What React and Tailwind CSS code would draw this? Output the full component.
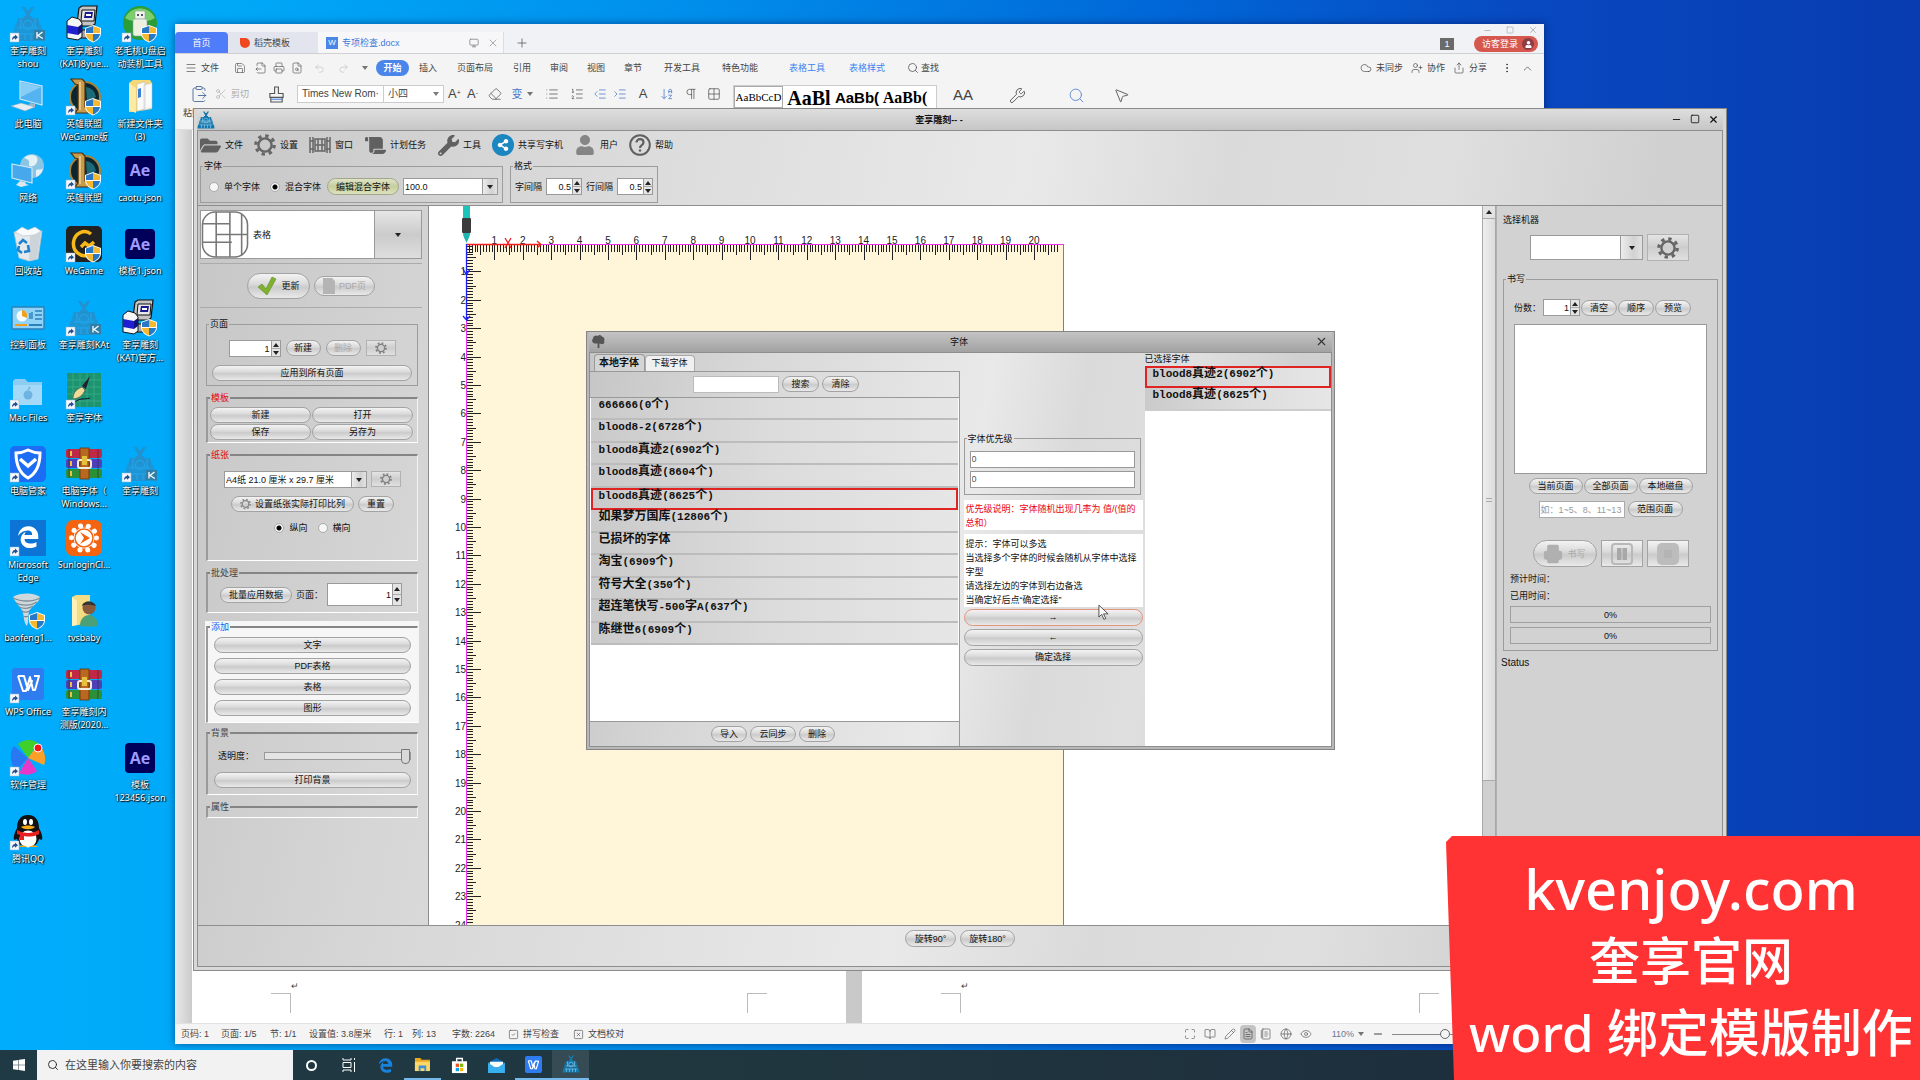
import React from "react";
import {
  Menu, Save, Printer, Search, Undo2, Redo2, Scissors, ClipboardPaste, Eraser, List, ListOrdered,
  IndentDecrease, IndentIncrease, ArrowDownAZ, Pilcrow, Grid2x2, Wrench, MousePointer2, Cloud, UserPlus, Share,
  EllipsisVertical, ChevronUp, Plus, X, Minus, Square, Monitor, FileSearch, FileOutput, Maximize, BookOpen, Pencil,
  FileText, NotebookText, Globe, Eye, SquareCheck, SquareX,
} from "lucide-react";
import { FaFolderOpen, FaWrench, FaUser, FaShareAlt, FaScroll, FaEdgeLegacy } from "react-icons/fa";

const METAL = "bg-[linear-gradient(100deg,#c6c6c6_0%,#d6d6d6_18%,#e2e2e2_38%,#e9e9e9_50%,#dadada_62%,#dfdfdf_75%,#d0d0d0_88%,#d2d2d2_100%)]";
const BTN = "border border-[#a3a3a3] bg-[linear-gradient(180deg,#f3f3f3_0%,#dcdcdc_40%,#cbcbcb_55%,#e9e9e9_100%)]";

/* ---------- shared controls ---------- */
function Pill({ children, className = "", ...rest }) {
  return (
    <button className={`${BTN} flex h-4 items-center justify-center gap-1 rounded-full px-2 whitespace-nowrap ${className}`} {...rest}>
      {children}
    </button>
  );
}

function Down({ className = "" }) {
  return (
    <svg viewBox="0 0 6 4" className={`h-1 w-1.5 ${className}`}>
      <path d="M0 0h6L3 4z" fill="#222" />
    </svg>
  );
}

function Spin({ value, label, className = "" }) {
  return (
    <span className={`flex h-[17px] border border-[#9a9a9a] bg-white ${className}`}>
      <input aria-label={label} defaultValue={value} className="w-full min-w-0 bg-transparent pr-px text-right outline-none" />
      <span className="flex w-[9px] shrink-0 flex-col border-l border-[#9a9a9a] bg-[#e4e4e4]">
        <button aria-label={`${label} +`} className="flex flex-1 items-center justify-center border-b border-[#aaa]">
          <Down className="w-1 rotate-180" />
        </button>
        <button aria-label={`${label} -`} className="flex flex-1 items-center justify-center">
          <Down className="w-1" />
        </button>
      </span>
    </span>
  );
}

function Combo({ value, label, className = "", arrow = "w-[15px]" }) {
  return (
    <span className={`relative flex border border-[#9a9a9a] bg-white ${className}`}>
      <select aria-label={label} className="w-full appearance-none bg-transparent pl-px outline-none">
        <option>{value}</option>
      </select>
      <span className={`pointer-events-none absolute inset-y-0 right-0 flex items-center justify-center border-l border-[#9a9a9a] bg-[linear-gradient(90deg,#ececec,#d2d2d2_60%,#e2e2e2)] ${arrow}`}>
        <Down />
      </span>
    </span>
  );
}

function Group({ title, color = "", className = "", body = "", sunken = false, children }) {
  const edge = sunken
    ? "border-t-2 border-l-2 border-r border-b border-t-[#858585] border-l-[#9a9a9a] border-r-[#f4f4f4] border-b-white"
    : "border border-[#9c9c9c]";
  return (
    <fieldset className={`min-w-0 ${edge} ${className}`}>
      <legend className={`ml-0.5 h-3 px-px leading-3 ${color}`}>{title}</legend>
      <div className={body}>{children}</div>
    </fieldset>
  );
}

function Radio({ name, label, on }) {
  return (
    <label className="flex items-center gap-[5px] whitespace-nowrap">
      <input
        type="radio"
        name={name}
        defaultChecked={on}
        className="h-[10px] w-[10px] appearance-none rounded-full border border-[#aaa] bg-[#f6f6f6] checked:bg-[radial-gradient(circle,#000_2px,#f6f6f6_3px)]"
      />
      {label}
    </label>
  );
}

function Gear({ className = "", color = "#666" }) {
  return (
    <svg viewBox="0 0 24 24" className={className} fill="none" stroke={color}>
      <circle cx="12" cy="12" r="7.2" strokeWidth="2.6" />
      <circle cx="12" cy="12" r="10" strokeWidth="3.6" strokeDasharray="3.6 4.25" />
    </svg>
  );
}

/* ---------- desktop icon art ---------- */
function Shortcut() {
  return (
    <g>
      <rect x="0" y="27" width="9" height="9" fill="#f4f8fc" stroke="#8fb6d6" strokeWidth=".5" />
      <path d="M2 34.500c0-3 1-4.500 3-4.500v-1.500l3 2.700-3 2.600v-1.500c-1.300 0-2 .8-3 2.200z" fill="#24508f" />
    </g>
  );
}
function Shield() {
  return (
    <g>
      <path d="M27 19l8 3v5c0 5-4 8-8 9.500-4-1.500-8-4.500-8-9.500v-5z" fill="#fff" />
      <path d="M27 20v7h-7v-4.500z" fill="#2878c8" />
      <path d="M27 20v7h7v-4.500z" fill="#f5b82e" />
      <path d="M27 28v7.500c-4-1.500-6.700-4.200-7-7.500z" fill="#f5b82e" />
      <path d="M27 28v7.500c4-1.500 6.700-4.200 7-7.500z" fill="#2878c8" />
    </g>
  );
}
function KatShape({ fill = "#3a82b4", line = "#7cc0e6" }) {
  return (
    <g fill={fill}>
      <path d="M12 1h3l2 3h2l2-3h3l-4 7h-4z" />
      <path d="M16 8h4v5h-4z" />
      <path d="M8 12h6v-2h8v2h6l2 7H6z" />
      <path d="M5 19h26l2 9H3z" opacity=".85" />
      <path d="M2 28h32l1 7H1z" />
      <path d="M11 13v9M25 13v9M8 22h20M6 28h24M9 28v6M15 28v6M21 28v6M27 28v6" stroke={line} strokeWidth="1.200" fill="none" />
      <circle cx="18" cy="19" r="4.500" fill="none" stroke={line} strokeWidth="1.200" />
    </g>
  );
}

const ART = {
  kat: (
    <>
      <g opacity=".6"><KatShape line="#38a4e0" /></g>
      <rect x="24" y="24" width="11" height="10" fill="#2f7fa8" />
      <path d="M27 26v6.500M32.500 26l-4.500 3.500 4.800 3" stroke="#fff" strokeWidth="1.300" fill="none" />
      <Shortcut />
    </>
  ),
  installer: (
    <>
      <path d="M13 2l3-2h15l-2 18-3 2H14l-3-3z" fill="#c4c4c4" stroke="#111" strokeWidth="1.200" />
      <path d="M16 4h13l-1 11H15z" fill="#e8e8e8" stroke="#111" />
      <path d="M19 6h8l-1 6h-8z" fill="#18188f" />
      <path d="M20 8h5v2h-5z" fill="#fff" />
      <path d="M11 24h18l3 8H8z" fill="#aaa" stroke="#111" />
      <path d="M1 15l5-4 7 2 3 4v14l-4 3-11-2z" fill="#f6f6f6" stroke="#111" />
      <path d="M1 19l11 2v8L1 27z" fill="#2020d0" />
      <path d="M12 21l4-3v8l-4 3z" fill="#111180" />
      <Shield />
    </>
  ),
  usb: (
    <>
      <circle cx="18" cy="17" r="17" fill="#2c9c36" />
      <path d="M3 12a16 15 0 0 1 30 0c-8 5-22 5-30 0z" fill="#8fdc7a" opacity=".8" />
      <rect x="13" y="5" width="10" height="8" rx="1" fill="#f4f4e6" stroke="#8aa" strokeWidth=".6" />
      <path d="M15 8h2v2h-2zM19 8h2v2h-2z" fill="#557" />
      <rect x="11" y="13" width="14" height="17" rx="2" fill="#eef0e0" stroke="#8aa" strokeWidth=".6" />
      <Shield /><Shortcut />
    </>
  ),
  pc: (
    <>
      <path d="M10 2l22 5v19L10 20z" fill="#54b3f0" stroke="#cfe6f5" strokeWidth="1.200" />
      <path d="M11 3l20 5-20 10z" fill="#86cdf8" />
      <path d="M20 24l5 1v3h-7z" fill="#a8b8c4" />
      <path d="M1 27l10-3 14 4-10 4z" fill="#e6eef4" stroke="#8aa4b8" strokeWidth=".6" />
    </>
  ),
  net: (
    <>
      <circle cx="22" cy="13" r="12" fill="#8cc4e4" />
      <path d="M14 5c4 1 6 3 5 6s4 3 6 1 4-6 1-9c-4-2-9-1-12 2zM26 17c3-1 6 0 7-2-1 5-4 8-7 9z" fill="#e4f2f8" />
      <path d="M2 11l20 4v15L2 25z" fill="#48a8ec" stroke="#d0e8f8" strokeWidth="1.200" />
      <path d="M10 28l5 1 1 2 3 1-8 2-5-2z" fill="#dde6ec" />
    </>
  ),
  bin: (
    <>
      <path d="M4 6l28-1-4 28-9 2-10-3z" fill="#e4e9ec" stroke="#b8c4cc" strokeWidth=".8" />
      <path d="M5 6l7-5 6 3 7-3 6 4-6 4-12 1z" fill="#f8fafb" stroke="#b4bec6" strokeWidth=".6" />
      <path d="M20 10l11-4-4 27-8 2z" fill="#cdd4d9" />
      <path d="M9 18l4-4 4 3M18 19l1 6-5 1M12 27l-4-3 1-4" fill="none" stroke="#2080d0" strokeWidth="2.600" />
    </>
  ),
  panel: (
    <>
      <rect x="2" y="7" width="32" height="22" rx="1" fill="#8fd3f8" stroke="#2c80b8" strokeWidth="1.400" />
      <circle cx="12" cy="16" r="5.500" fill="#f4fbff" />
      <path d="M12 16V10a6 6 0 0 1 5 8z" fill="#f0a020" />
      <path d="M20 13v6M22 12v7M25 11h7M25 15h7M25 19h7" stroke="#2c80b8" strokeWidth="1.400" />
      <path d="M5 25h12" stroke="#f0a020" strokeWidth="2" />
      <path d="M19 25h13" stroke="#2c80b8" strokeWidth="2" />
    </>
  ),
  mac: (
    <>
      <path d="M3 8l2-2h10l3 3h14v23H3z" fill="#8ccdf4" />
      <path d="M3 12h29v20H3z" fill="#a4daf8" />
      <circle cx="18" cy="22" r="4.500" fill="#6fb4e0" />
      <path d="M18 17l2-3" stroke="#6fb4e0" strokeWidth="1.500" />
      <Shortcut />
    </>
  ),
  guard: (
    <>
      <rect width="36" height="36" rx="5" fill="#1c6cf4" />
      <path d="M18 4c4 2 8 3 12 3 0 12-3 20-12 25C9 27 6 19 6 7c4 0 8-1 12-3z" fill="none" stroke="#fff" strokeWidth="3" />
      <path d="M10 13l8 7 8-7" fill="none" stroke="#fff" strokeWidth="3.500" />
      <Shortcut />
    </>
  ),
  edge: (
    <>
      <rect width="36" height="36" fill="#0c74d4" />
      <g transform="translate(7 6) scale(1.400)"><FaEdgeLegacy color="#fff" size="16" /></g>
      <Shortcut />
    </>
  ),
  tornado: (
    <>
      <path d="M3 4c8-5 22-4 27 0-1 6-7 8-11 14-1 5 0 10-2 15-3-3-3-8-4-13C11 13 5 10 3 4z" fill="#cfd8dc" />
      <path d="M3 5c8 4 20 4 27 0M6 10c6 3 15 3 21-1M9 14c4 2 10 2 14-1M12 18c3 2 6 1 8 0M13 23c2 1 4 1 6 0" fill="none" stroke="#7d8c94" strokeWidth="1.300" />
      <Shield />
    </>
  ),
  wps: (
    <>
      <rect x="2" y="1" width="32" height="32" rx="3" fill="#2e7cf0" />
      <path d="M8 9h6l4 14 4-9h-4M8 9l5 15h3l4-14 3 13h2l4-14h-5" fill="none" stroke="#fff" strokeWidth="2" strokeLinejoin="round" />
      <Shortcut />
    </>
  ),
  soft: (
    <>
      <path d="M18 18L8 4c6-5 14-5 20-1z" fill="#3fd02c" />
      <path d="M18 18L28 4c6 5 9 14 6 21z" fill="#f8a028" />
      <path d="M18 18l9 13c-6 5-13 4-18 2z" fill="#e838c8" />
      <path d="M18 18L6 31C0 24-1 12 4 6z" fill="#2878f4" />
      <circle cx="28" cy="8" r="4" fill="#f01818" stroke="#fff" />
      <Shortcut />
    </>
  ),
  qq: (
    <>
      <path d="M18 1c8 0 11 6 11 13 2 4 4 8 3 12l-3-1c-1 5-5 8-11 8S8 30 7 25l-3 1c-1-4 1-8 3-12C7 7 10 1 18 1z" fill="#111" />
      <ellipse cx="18" cy="25" rx="8.500" ry="8.500" fill="#fff" />
      <ellipse cx="15" cy="8" rx="2" ry="3" fill="#fff" /><ellipse cx="21" cy="8" rx="2" ry="3" fill="#fff" />
      <path d="M11 13c4-2 10-2 14 0-3 3-11 3-14 0z" fill="#f8a818" />
      <path d="M7 16c7 4 15 4 22 0v4c-5 3-11 3-15 2v4h-4v-5l-3-1z" fill="#e82020" />
      <path d="M8 33c3-2 7-2 9 0zM19 33c3-2 7-2 9 0z" fill="#f8a818" />
      <Shortcut />
    </>
  ),
  lol: (
    <>
      <circle cx="19" cy="18" r="15" fill="#0c2630" stroke="#a8843c" strokeWidth="2" />
      <path d="M20 8a11 11 0 0 1 10 10l-9 4z" fill="#1c6a78" />
      <path d="M5 0h11l3 3v25h12l-3 6H9l3-4V6L9 5z" fill="#c89a4c" stroke="#4a3010" strokeWidth="1.200" />
      <path d="M14 3v28" stroke="#f0d090" strokeWidth="1.500" />
      <Shield /><Shortcut />
    </>
  ),
  wegame: (
    <>
      <rect width="36" height="36" rx="5" fill="#222" />
      <path d="M25 8a11 12 0 1 0-3 21M15 21l4-4 4 3 5-4" fill="none" stroke="#f8b818" strokeWidth="3.500" />
      <Shield /><Shortcut />
    </>
  ),
  pen: (
    <>
      <rect x="1" width="34" height="34" fill="#1c9470" />
      <path d="M7 0v34M14 0v34M21 0v34M28 0v34M1 7h34M1 14h34M1 21h34M1 28h34" stroke="#4ab494" strokeWidth=".6" />
      <path d="M7 26c0-7 4-10 9-12l3 3c-2 5-5 8-12 9z" fill="#f0dc98" stroke="#444" strokeWidth=".6" />
      <path d="M16 13L24 3l-4 13z" fill="#223" />
      <path d="M8 30c6-6 10-3 16-5" fill="none" stroke="#113" strokeWidth="1" />
      <Shortcut />
    </>
  ),
  rar: (
    <>
      <rect x="0" y="3" width="36" height="9" rx="2" fill="#c02848" />
      <rect x="0" y="13" width="36" height="9" rx="2" fill="#5040b8" />
      <rect x="0" y="23" width="36" height="9" rx="2" fill="#2c9038" />
      <path d="M3 3v29M32 3v29" stroke="#222" strokeWidth="1" opacity=".5" />
      <path d="M5 5v5M5 15v5M5 25v5" stroke="#f0c040" strokeWidth="2" />
      <rect x="14" y="2" width="9" height="31" fill="#b86820" stroke="#6a3408" strokeWidth=".8" />
      <rect x="12" y="14" width="13" height="8" rx="2" fill="none" stroke="#f4ecd8" strokeWidth="2" />
      <rect x="16" y="10" width="5" height="9" fill="#e8c040" />
    </>
  ),
  sun: (
    <>
      <rect width="36" height="36" rx="7" fill="#f46410" />
      <circle cx="18" cy="18" r="12.500" fill="none" stroke="#fff" strokeWidth="5" strokeDasharray="0.1 7.754" strokeLinecap="round" />
      <circle cx="18" cy="18" r="10.500" fill="#fff" />
      <circle cx="18" cy="18" r="9" fill="none" stroke="#f46410" strokeWidth="1.500" />
      <path d="M14 12l10 6-10 6 4-6z" fill="#f46410" />
    </>
  ),
  userfolder: (
    <>
      <path d="M6 4l4-2h14v28l-18 3z" fill="#f4dc84" />
      <path d="M6 4l5 4v24l-5 1z" fill="#fdf0b8" />
      <circle cx="23" cy="15" r="6.500" fill="#8a5a3c" />
      <path d="M16 13c1-6 12-6 14 0-5-1-9-2-14 0z" fill="#333" />
      <path d="M14 33c0-7 4-11 9-11s9 4 9 11c-6 1-12 1-18 0z" fill="#4ca078" />
    </>
  ),
  folder: (
    <>
      <path d="M7 4l4-3h17l2 3v26L11 33H7z" fill="#f4d878" />
      <path d="M15 5l8-2v27l-8 2zM22 6l8-2v25l-8 2z" fill="#fafafa" stroke="#bbb" strokeWidth=".5" />
      <path d="M16 10l3-1v9l-3 1z" fill="#3a80d8" />
      <path d="M7 4l7 5v25l-7-3z" fill="#fdeaa4" />
    </>
  ),
};

const DESKTOP = [
  ["kat", "奎享雕刻", "shou"], ["installer", "奎享雕刻", "(KAT)8yue..."], ["usb", "老毛桃U盘启", "动装机工具"],
  ["pc", "此电脑"], ["lol", "英雄联盟", "WeGame版"], ["folder", "新建文件夹", "(3)"],
  ["net", "网络"], ["lol", "英雄联盟"], ["ae", "caotu.json"],
  ["bin", "回收站"], ["wegame", "WeGame"], ["ae", "模板1.json"],
  ["panel", "控制面板"], ["kat", "奎享雕刻KAt"], ["installer", "奎享雕刻", "(KAT)官方..."],
  ["mac", "Mac Files"], ["pen", "奎享字体"], null,
  ["guard", "电脑管家"], ["rar", "电脑字体（", "Windows..."], ["kat", "奎享雕刻"],
  ["edge", "Microsoft", "Edge"], ["sun", "SunloginCl..."], null,
  ["tornado", "baofeng1..."], ["userfolder", "tvsbaby"], null,
  ["wps", "WPS Office"], ["rar", "奎享雕刻内", "测版(2020..."], null,
  ["soft", "软件管理"], null, ["ae", "模板", "123456.json"],
  ["qq", "腾讯QQ"], null, null,
];

function DesktopIcons() {
  return (
    <div className="absolute top-0 left-0 grid h-[881px] w-[168px] auto-rows-fr grid-cols-3 font-['Noto_Sans','Noto_Sans_CJK_SC',sans-serif] text-[9px] leading-[13px] text-white">
      {DESKTOP.map((d, i) =>
        d ? (
          <a key={i} href="#" className="flex flex-col items-center gap-0.5 pt-1.5">
            {d[0] === "ae" ? (
              <span className="m-[3px] flex h-[30px] w-[30px] items-center justify-center rounded bg-[#00005b] font-['Open_Sans'] text-[16px] font-bold text-[#9f9bff]">Ae</span>
            ) : (
              <svg viewBox="0 0 36 36" className="h-9 w-9 shrink-0 overflow-visible">{ART[d[0]]}</svg>
            )}
            <span className="flex flex-col items-center whitespace-nowrap [text-shadow:1px_1px_1px_#000,0_0_2px_#000]">
              <span>{d[1]}</span>
              {d[2] && <span>{d[2]}</span>}
            </span>
          </a>
        ) : (
          <span key={i} />
        )
      )}
    </div>
  );
}

/* ---------- word processor window behind ---------- */
const MENUS = [["插入", "w-[38px]"], ["页面布局", "w-[56px]"], ["引用", "w-[37px]"], ["审阅", "w-[37px]"], ["视图", "w-[37px]"], ["章节", "w-[40px]"], ["开发工具", "w-[58px]"], ["特色功能", "w-[67px]"]];

function Tool({ icon: Icon, w = "w-5", color = "text-[#555]", size = 14 }) {
  return (
    <span className={`flex shrink-0 items-center justify-center ${w} ${color}`}>
      <Icon size={size} strokeWidth={1.3} />
    </span>
  );
}

function CropMarks() {
  return (
    <div className="flex justify-between">
      <span className="block h-5 w-5 border-t border-r border-[#bbb]" />
      <span className="block h-5 w-5 border-t border-l border-[#bbb]" />
    </div>
  );
}

function FormatBrush() {
  return (
    <span className="flex h-[18px] w-[34px] shrink-0 items-center justify-center">
      <svg viewBox="0 0 18 18" className="h-[17px]" fill="none" stroke="#555" strokeWidth="1.200">
        <path d="M7 1h4v7h5v4H2V8h5zM3 12v5h12v-5" />
        <path d="M3 14h12" stroke="#4a86ea" />
      </svg>
    </span>
  );
}

function WriterWindow() {
  return (
    <section className="absolute top-6 right-[376px] bottom-9 left-[175px] flex flex-col bg-[#f4f4f5] text-[9px] text-[#444] shadow-[0_0_8px_rgba(0,0,60,0.5)]">
      <div className="flex h-[30px] items-end border-b border-[#cfd0d4] bg-[#f1f2f6]">
        <button className="h-[21px] w-[53px] rounded-t bg-[#4f7cf8] text-white">首页</button>
        <button className="flex h-[21px] w-[90px] items-center gap-1 bg-[#e3e5ee] pl-3">
          <span className="flex h-2.5 w-2.5 items-center justify-center rounded-full rounded-tl-none bg-[#f04820]" />稻壳模板
        </button>
        <div className="flex h-[21px] w-[186px] items-center gap-1 border-r border-[#ddd] bg-[#f7f7fa] pl-2 text-[#3c78d8]">
          <span className="flex h-3 w-3 items-center justify-center bg-[#4a86e8] text-[8px] text-white">W</span>
          <span className="flex-1">专项检查.docx</span>
          <Monitor size={10} color="#888" />
          <X size={12} strokeWidth={1.2} color="#777" className="mr-1 ml-1" />
        </div>
        <Tool icon={Plus} w="w-9 h-[21px]" />
        <div className="flex flex-1 flex-col items-end self-stretch pr-1.5">
          <div className="flex h-3 items-center gap-3.5 text-[#aaa]"><Minus size={9} /><Square size={8} /><X size={10} /></div>
          <div className="flex items-center gap-5">
            <span className="flex h-3 w-3.5 items-center justify-center bg-[#6a6a6a] text-white">1</span>
            <button className="flex h-4 items-center gap-1 rounded-full bg-[#d6574e] pr-1 pl-2 text-white">访客登录
              <span className="flex h-3 w-3 items-center justify-center rounded-full bg-[#8c3c44]"><FaUser size={7} /></span>
            </button>
          </div>
        </div>
      </div>
      <div className="flex h-7 items-center pl-2.5 whitespace-nowrap">
        <button className="flex w-[42px] items-center gap-1"><Menu size={12} strokeWidth={1.3} />文件</button>
        <Tool icon={Save} w="w-[25px]" size={12} />
        <Tool icon={FileOutput} w="w-[18px]" size={12} />
        <Tool icon={Printer} w="w-[18px]" size={12} />
        <Tool icon={FileSearch} w="w-[18px]" size={12} />
        <Tool icon={Undo2} w="w-[26px]" color="text-[#bbb]" size={11} />
        <Tool icon={Redo2} w="w-[22px]" color="text-[#bbb]" size={11} />
        <span className="flex w-[22px] items-center justify-center"><Down className="opacity-60" /></span>
        <button className="mr-2.5 h-4 w-[33px] rounded-full bg-[#4a86ea] font-bold text-white">开始</button>
        {MENUS.map(([m, w]) => (
          <button key={m} className={`shrink-0 text-left ${w}`}>{m}</button>
        ))}
        <button className="w-[60px] text-left text-[#3c82f0]">表格工具</button>
        <button className="w-[58px] text-left text-[#3c82f0]">表格样式</button>
        <button className="flex items-center gap-0.5"><Search size={12} strokeWidth={1.4} />查找</button>
        <div className="ml-auto flex items-center gap-2 pr-2.5">
          <span className="flex items-center gap-1"><Cloud size={12} strokeWidth={1.3} />未同步</span>
          <span className="flex items-center gap-1"><UserPlus size={12} strokeWidth={1.3} />协作</span>
          <span className="flex items-center gap-1"><Share size={12} strokeWidth={1.3} />分享</span>
          <EllipsisVertical size={12} className="ml-1.5" />
          <ChevronUp size={13} strokeWidth={1.3} />
        </div>
      </div>
      <div className="flex h-12 items-start border-b border-[#ddd] pt-[3px] pl-2">
        <div className="flex w-8 flex-col items-center">
          <ClipboardPaste size={18} strokeWidth={1.2} color="#4a6a9c" />
          <span className="mt-1 self-start">粘贴</span>
        </div>
        <span className="flex h-[18px] w-[44px] items-center gap-1 text-[#aaa]"><Scissors size={12} strokeWidth={1.2} />剪切</span>
        <FormatBrush />
        <div className="ml-1 flex h-[18px] border border-[#ccc] bg-white text-[10px]">
          <span className="flex w-[86px] items-center overflow-hidden border-r border-[#ccc] pl-1 whitespace-nowrap">Times New Rom·<Down className="mr-1 ml-auto w-1 opacity-60" /></span>
          <span className="flex w-[59px] items-center pl-1">小四<Down className="mr-1 ml-auto w-1 opacity-60" /></span>
        </div>
        <div className="ml-1 flex h-[18px] items-center">
          <span className="w-[19px] text-[13px]">A<sup className="text-[7px]">+</sup></span>
          <span className="w-[18px] text-[13px]">A<sup className="text-[7px]">-</sup></span>
          <Tool icon={Eraser} />
          <span className="flex w-[34px] items-center justify-center gap-1 text-[11px] text-[#4a78c8]">变<Down className="w-1 opacity-60" /></span>
          <Tool icon={List} w="w-[25px]" /><Tool icon={ListOrdered} w="w-[26px]" />
          <Tool icon={IndentDecrease} color="text-[#4a78c8]" /><Tool icon={IndentIncrease} color="text-[#4a78c8]" />
          <span className="w-[26px] text-center text-[13px]">A</span>
          <Tool icon={ArrowDownAZ} w="w-[22px]" color="text-[#4a78c8]" /><Tool icon={Pilcrow} w="w-[25px]" /><Tool icon={Grid2x2} w="w-[22px]" />
        </div>
        <div className="ml-2 flex h-8 w-[204px] items-start overflow-hidden border border-[#ccc] bg-white text-black">
          <span className="mr-0.5 w-[49px] shrink-0 border border-[#aaa] py-1 text-center font-['Liberation_Serif'] text-[11px]">AaBbCcD</span>
          <span className="w-[48px] shrink-0 text-center font-['Liberation_Serif'] text-[20px] leading-6 font-bold">AaBl</span>
          <span className="w-[48px] shrink-0 text-center text-[15px] leading-6 font-bold">AaBb(</span>
          <span className="w-[48px] shrink-0 text-center font-['Liberation_Serif'] text-[16px] leading-6 font-bold">AaBb(</span>
        </div>
        <div className="flex h-5 items-center">
          <span className="ml-4 w-10 text-[15px]">AA</span>
          <Tool icon={Wrench} w="w-12" size={17} />
          <Tool icon={Search} w="w-[70px]" color="text-[#5a88d0]" size={17} />
          <Tool icon={MousePointer2} size={17} />
        </div>
      </div>
      <div className="flex flex-1 items-stretch overflow-hidden bg-[linear-gradient(90deg,#e9e9e9_0,#c9c9c9_18px)] pl-[17px]">
        <div className="flex w-[654px] shrink-0 flex-col justify-end bg-white px-[79px] pb-2.5">
          <span className="ml-5 leading-[14px]">↵</span>
          <CropMarks />
        </div>
        <div className="ml-4 flex flex-1 flex-col justify-end bg-white pr-[105px] pb-2.5 pl-[79px]">
          <span className="ml-5 leading-[14px]">↵</span>
          <CropMarks />
        </div>
      </div>
      <div className="flex h-[21px] items-center border-t border-[#e2e2e2] pl-1.5 whitespace-nowrap">
        <span className="w-10">页码: 1</span><span className="w-[49px]">页面: 1/5</span><span className="w-[39px]">节: 1/1</span>
        <span className="w-[75px]">设置值: 3.8厘米</span><span className="w-7">行: 1</span><span className="w-10">列: 13</span>
        <span className="w-14">字数: 2264</span>
        <span className="flex w-[65px] items-center gap-1"><SquareCheck size={11} strokeWidth={1.3} />拼写检查</span>
        <span className="flex items-center gap-1"><SquareX size={11} strokeWidth={1.3} />文档校对</span>
        <div className="ml-auto flex items-center pr-[88px]">
          <Tool icon={Maximize} size={12} /><Tool icon={BookOpen} size={12} /><Tool icon={Pencil} size={12} />
          <span className="flex h-[18px] w-4 items-center justify-center rounded-sm bg-[#c4c4c4]"><FileText size={12} strokeWidth={1.3} /></span>
          <Tool icon={NotebookText} size={12} /><Tool icon={Globe} size={12} /><Tool icon={Eye} size={12} />
          <span className="ml-4 text-[#667a94]">110%</span>
          <Down className="mx-1 w-1 opacity-60" />
          <Minus size={12} className="mx-1" />
          <span className="ml-1 flex w-16 items-center"><span className="h-px flex-1 bg-[#888]" /><span className="h-2.5 w-2.5 rounded-full border border-[#666]" /><span className="h-px w-1.5 bg-[#888]" /></span>
        </div>
      </div>
    </section>
  );
}

/* ---------- engraving application ---------- */
function AppLogo({ className = "" }) {
  return <svg viewBox="0 0 36 36" className={className}><KatShape fill="#1478ac" line="#8cd0f4" /></svg>;
}

function MenuItem({ label, children }) {
  return (
    <button className="flex items-center gap-1 whitespace-nowrap">
      <span className="flex h-[22px] w-[22px] items-center justify-center text-[#606060]">{children}</span>
      {label}
    </button>
  );
}

function Toolbar() {
  return (
    <div className="flex h-[74px] flex-col">
      <nav className="flex h-7 items-center gap-[11px] pl-px">
        <MenuItem label="文件"><FaFolderOpen size={21} /></MenuItem>
        <MenuItem label="设置"><Gear className="h-[22px] w-[22px]" /></MenuItem>
        <MenuItem label="窗口">
          <svg viewBox="0 0 22 22" className="h-[22px]" fill="none" stroke="#666" strokeWidth="1.500">
            <path d="M1 3v16M4 3v16M18 3v16M21 3v16M6 5h10v12H6zM9 5v12M13 5v12M1 7h4M1 15h4M17 7h4M17 15h4M6 11h10" />
          </svg>
        </MenuItem>
        <MenuItem label="计划任务"><FaScroll size={21} /></MenuItem>
        <MenuItem label="工具"><FaWrench size={21} /></MenuItem>
        <MenuItem label="共享写字机">
          <span className="flex h-[22px] w-[22px] items-center justify-center rounded-full bg-[#1b86c0] text-white"><FaShareAlt size={12} /></span>
        </MenuItem>
        <MenuItem label="用户"><FaUser size={20} color="#858585" /></MenuItem>
        <MenuItem label="帮助">
          <svg viewBox="0 0 22 22" className="h-[22px]" fill="none" stroke="#606060">
            <circle cx="11" cy="11" r="9.800" strokeWidth="2" />
            <path d="M7.500 8.500c0-4.500 7-4.500 7 0 0 2.700-3.500 2.500-3.500 5.500" strokeWidth="2.200" />
            <circle cx="11" cy="16.500" r="1" fill="#606060" strokeWidth=".6" />
          </svg>
        </MenuItem>
      </nav>
      <div className="flex gap-[7px] pt-px pl-0.5">
        <Group title="字体" className="h-[43px]" body="flex items-center pt-1.5 pr-1 pl-2">
          <Radio name="fontmode" label="单个字体" />
          <span className="w-2.5" />
          <Radio name="fontmode" label="混合字体" on />
          <button className="mr-1 ml-1.5 h-[17px] w-[72px] rounded-full border border-[#a2a68c] bg-[linear-gradient(180deg,#dfe4c6,#c6ce9e_50%,#dce2bc)]">编辑混合字体</button>
          <Combo label="字号" value="100.0" className="h-[17px] w-[95px]" />
        </Group>
        <Group title="格式" className="h-[43px]" body="flex items-center gap-1 pt-1.5 pr-1 pl-1">
          字间隔<Spin label="字间隔" value="0.5" className="w-9" />
          行间隔<Spin label="行间隔" value="0.5" className="w-9" />
        </Group>
      </div>
    </div>
  );
}

function GearButton({ className = "h-4 w-[30px]", icon = "h-3 w-3", color = "#808080" }) {
  return (
    <button aria-label="设置" className={`flex items-center justify-center border border-[#b2b2b2] bg-[linear-gradient(180deg,#e4e4e4,#cdcdcd_50%,#e0e0e0)] ${className}`}>
      <Gear className={icon} color={color} />
    </button>
  );
}

function LeftPanel() {
  return (
    <aside className="flex w-[231px] shrink-0 flex-col border-r border-[#8c8c8c] pt-1 pr-1.5 pl-0.5">
      <div className="flex h-[49px] border border-[#9a9a9a] bg-white">
        <span className="flex flex-1 items-center gap-1">
          <svg viewBox="0 0 48 48" className="h-[47px] w-12" fill="none" stroke="#777" strokeWidth="1.600">
            <rect x="1" y="1" width="46" height="46" rx="13" />
            <path d="M15 1v46M29 1v46M41 3v42M1 13h28M1 32h30M15 24h32M29 35V1" />
          </svg>
          表格
        </span>
        <button aria-label="选择类型" className="flex w-[47px] items-center justify-center border-l border-[#9a9a9a] bg-[linear-gradient(180deg,#e6e6e6,#cbcbcb_50%,#dedede)]"><Down /></button>
      </div>
      <div className="mt-1 flex h-[45px] items-center justify-center gap-1 border-y border-[#ababab]">
        <Pill className="h-[26px] w-[63px]">
          <svg viewBox="0 0 20 20" className="h-5 w-5"><path d="M1 11l4-3 4 5L15 1l4 2-9 16z" fill="#7fb030" stroke="#5f8c20" strokeWidth=".6" /></svg>
          更新
        </Pill>
        <Pill disabled className="h-5 w-[61px] text-[#a8a8a8]">
          <svg viewBox="0 0 12 16" className="h-4 w-3"><path d="M0 0h9l3 3v13H0z" fill="#b4b4b4" /></svg>
          PDF页
        </Pill>
      </div>
      <div className="mr-1 ml-1.5 flex flex-col pt-2.5">
        <Group title="页面" body="flex flex-col gap-2 px-[5px] pb-1">
          <div className="flex justify-center gap-[5px] pt-2.5">
            <Spin label="页面" value="1" className="w-[52px]" />
            <Pill className="w-[35px]">新建</Pill>
            <Pill disabled className="w-[35px] text-[#a8a8a8]">删除</Pill>
            <GearButton />
          </div>
          <Pill>应用到所有页面</Pill>
        </Group>
        <Group sunken title="模板" color="text-red-600" className="mt-1.5" body="grid grid-cols-2 gap-px pt-[3px] pr-1 pb-0.5 pl-0.5">
          <Pill>新建</Pill><Pill>打开</Pill><Pill>保存</Pill><Pill>另存为</Pill>
        </Group>
        <Group sunken title="纸张" color="text-red-600" className="mt-1.5 h-[112px]" body="px-2">
          <div className="flex justify-center gap-1 pt-2.5">
            <Combo label="纸张" value="A4纸 21.0 厘米 x 29.7 厘米" className="h-[17px] w-[143px]" />
            <GearButton />
          </div>
          <div className="mt-2 flex justify-center gap-1">
            <Pill className="w-[123px]"><Gear className="h-3 w-3" color="#888" />设置纸张实际打印比列</Pill>
            <Pill className="w-[36px]">重置</Pill>
          </div>
          <div className="mt-2.5 flex justify-center gap-2.5">
            <Radio name="orient" label="纵向" on /><Radio name="orient" label="横向" />
          </div>
        </Group>
        <Group sunken title="批处理" color="text-[#444]" className="mt-1.5" body="flex items-center gap-1 pt-1 pb-1.5 pl-3">
          <Pill className="w-[72px]">批量应用数据</Pill>页面：
          <Spin label="批处理页面" value="1" className="h-[23px] w-[75px]" />
        </Group>
        <div className="mt-2 -mr-px -ml-px bg-[#f6f6f6] px-px">
          <Group sunken title="添加" color="text-blue-600" body="flex flex-col gap-[5px] px-1.5 pt-1 pb-1.5">
            <Pill>文字</Pill><Pill>PDF表格</Pill><Pill>表格</Pill><Pill>图形</Pill>
          </Group>
        </div>
        <Group sunken title="背景" color="text-[#444]" className="mt-1" body="flex flex-col px-1.5 pb-1.5">
          <label className="flex h-[26px] items-center gap-2.5 pt-2 pl-1">透明度：
            <input
              type="range"
              defaultValue="100"
              className="h-4 flex-1 appearance-none bg-transparent [&::-webkit-slider-runnable-track]:h-2 [&::-webkit-slider-runnable-track]:border [&::-webkit-slider-runnable-track]:border-[#9a9a9a] [&::-webkit-slider-runnable-track]:bg-[#e4e4e4] [&::-webkit-slider-thumb]:-mt-1 [&::-webkit-slider-thumb]:h-[15px] [&::-webkit-slider-thumb]:w-[9px] [&::-webkit-slider-thumb]:appearance-none [&::-webkit-slider-thumb]:rounded-b [&::-webkit-slider-thumb]:border [&::-webkit-slider-thumb]:border-[#777] [&::-webkit-slider-thumb]:bg-[#d8d8d8]"
            />
          </label>
          <Pill className="mt-[7px]">打印背景</Pill>
        </Group>
        <Group sunken title="属性" color="text-[#444]" className="mt-1.5 pb-1" />
      </div>
    </aside>
  );
}

const CM = 28.4;
function Canvas() {
  const ticksX = Array.from({ length: 208 }, (_, i) => i + 1);
  const ticksY = Array.from({ length: 245 }, (_, i) => i + 1);
  const len = (i) => (i % 10 === 0 ? 15 : i % 5 === 0 ? 10 : 7);
  return (
    <div className="relative min-w-0 flex-1 overflow-hidden bg-white">
      <svg className="absolute inset-0 h-full w-full" fontFamily="Liberation Sans" fontSize="10">
        <rect x="37" y="38" width="597" height="844" fill="#fff6da" />
        <path d={ticksX.map((i) => `M${Math.round(37 + (i * CM) / 10) + 0.5} 39v${len(i)}`).join("")} stroke="#222" />
        <path d={ticksY.map((i) => `M37 ${Math.round(37 + (i * CM) / 10) + 0.5}h${len(i)}`).join("")} stroke="#222" />
        <rect x="37.500" y="38.500" width="597" height="844" fill="none" stroke="#f030f0" />
        {Array.from({ length: 20 }, (_, i) => (
          <text key={i} x={37 + (i + 1) * CM} y="38" textAnchor="middle" fill="#222">{i + 1}</text>
        ))}
        {Array.from({ length: 24 }, (_, i) => (
          <text key={i} x="37" y={41 + (i + 1) * CM} textAnchor="end" fill="#222">{i + 1}</text>
        ))}
        <path d="M37 38.500h74M108 35l4 3.500-4 3.500M76 32l6 10M82 32l-6 10" stroke="#f02020" fill="none" strokeWidth="1.300" />
        <path d="M37.500 38v76M34 110l3.500 4 3.500-4M34 63l3.500 6 3.500-6M37.500 69v6" stroke="#2020f0" fill="none" strokeWidth="1.300" />
        <rect x="34" y="0" width="7" height="13" fill="#1cc4bc" />
        <rect x="33" y="12" width="9" height="15" rx="1" fill="#3c3c3c" />
        <path d="M34 27h7c0 4-2 6-3.500 10C36 33 34 31 34 27z" fill="#22b4b0" />
      </svg>
    </div>
  );
}

function RightPanel() {
  return (
    <aside className="flex w-[226px] shrink-0 flex-col border-l border-[#b0b0b0] bg-[#d2d2d2] pr-1 pl-1.5">
      <span className="mt-2">选择机器</span>
      <div className="mt-2 flex justify-center gap-1 pr-0.5">
        <Combo label="选择机器" value="" className="mt-px h-[25px] w-[113px]" arrow="w-[22px]" />
        <GearButton className="h-[27px] w-[42px]" icon="h-[22px] w-[22px]" color="#666" />
      </div>
      <Group title="书写" className="mt-3" body="flex flex-col px-1.5 pb-1.5">
        <div className="flex items-center gap-px pt-3.5 pl-1">
          <span className="w-7 whitespace-nowrap">份数：</span>
          <Spin label="份数" value="1" className="w-[37px]" />
          <Pill className="w-9">清空</Pill><Pill className="w-9">顺序</Pill><Pill className="w-9">预览</Pill>
        </div>
        <div className="mx-1 mt-2 h-[150px] border border-[#999] bg-white" />
        <div className="mt-1 flex justify-center gap-px">
          <Pill className="w-[54px]">当前页面</Pill><Pill className="w-[54px]">全部页面</Pill><Pill className="w-[54px]">本地磁盘</Pill>
        </div>
        <div className="mt-[7px] flex justify-center gap-[3px]">
          <input aria-label="页面范围" placeholder="如：1~5、8、11~13" className="h-[17px] w-[86px] border border-[#aaa] bg-white px-px placeholder:text-[#999]" />
          <Pill className="w-[55px]">范围页面</Pill>
        </div>
        <div className="mt-[22px] flex justify-center gap-1">
          <Pill disabled className="h-[27px] w-[64px] text-[#aaa]">
            <Printer size={20} fill="#b0b0b0" color="#b0b0b0" />书写
          </Pill>
          <button disabled aria-label="暂停" className={`${BTN} flex h-[27px] w-[42px] items-center justify-center`}>
            <svg viewBox="0 0 22 22" className="h-[22px]"><rect x="1" y="1" width="20" height="20" rx="3" fill="none" stroke="#b8b8b8" strokeWidth="2" /><path d="M6 5h4.500v12H6zM11.500 5H16v12h-4.500z" fill="#a8a8a8" /></svg>
          </button>
          <button disabled aria-label="停止" className={`${BTN} flex h-[27px] w-[42px] items-center justify-center`}>
            <svg viewBox="0 0 22 22" className="h-[22px]"><rect width="22" height="22" rx="5" fill="#bcbcbc" /><rect x="7" y="7" width="8" height="8" fill="#b4b4b4" /></svg>
          </button>
        </div>
        <span className="mt-1 leading-[17px]">预计时间：</span>
        <span className="leading-[17px]">已用时间：</span>
        {[0, 1].map((i) => (
          <div key={i} role="progressbar" aria-label={i ? "总进度" : "当前进度"} aria-valuenow={0} className="mt-px mb-[3px] flex h-[17px] items-center justify-center border border-[#a0a0a0] last:mb-0">0%</div>
        ))}
      </Group>
      <span className="mt-1.5 -ml-0.5 text-[10px]">Status</span>
    </aside>
  );
}

function EngraverWindow() {
  return (
    <section className="absolute top-[108px] right-[193px] bottom-[109px] left-[193px] flex flex-col border border-[#8a8a8a] bg-[#d8d8d8] px-[3px] pb-[3px]">
      <header className="flex h-[21px] items-center bg-[linear-gradient(180deg,#dedede,#c6c6c6)]">
        <div className="flex flex-1 items-center"><AppLogo className="h-[18px] w-[18px]" /></div>
        <h1 className="pr-[38px] font-bold">奎享雕刻-- -</h1>
        <div className="flex flex-1 justify-end gap-2 pr-1">
          <Minus size={11} /><Square size={10} /><X size={11} strokeWidth={2.5} />
        </div>
      </header>
      <div className={`flex min-h-0 flex-1 flex-col border border-[#8e8e8e] ${METAL}`}>
        <Toolbar />
        <div className="flex min-h-0 flex-1 border-y border-[#8e8e8e]">
          <LeftPanel />
          <Canvas />
          <div className="flex w-[14px] shrink-0 flex-col border-x border-[#a8a8a8] bg-[#cfcfcf]">
            <button aria-label="向上滚动" className="flex h-[13px] items-center justify-center border-b border-[#aaa] bg-[#e2e2e2]"><Down className="rotate-180" /></button>
            <div className="flex h-[562px] items-center justify-center border-b border-[#aaa] bg-[linear-gradient(90deg,#eee,#dcdcdc)]">
              <span className="h-1 w-1.5 border-y border-[#aaa]" />
            </div>
          </div>
          <RightPanel />
        </div>
        <footer className="flex h-10 items-start justify-center gap-1 pt-1">
          <Pill className="h-[17px] w-[51px]">旋转90°</Pill><Pill className="h-[17px] w-[55px]">旋转180°</Pill>
        </footer>
      </div>
    </section>
  );
}

/* ---------- font dialog ---------- */
function FontName({ text }) {
  return text.split(/([ -~]+)/).map((part, i) => (
    <span key={i} className={i % 2 ? "text-[11px]" : "text-[12px]"}>{part}</span>
  ));
}

const FONTS = ["666666(0个)", "blood8-2(6728个)", "blood8真迹2(6902个)", "blood8真迹(8604个)", "blood8真迹(8625个)", "如果梦万国库(12806个)", "已损坏的字体", "淘宝(6909个)", "符号大全(350个)", "超连笔快写-500字A(637个)", "陈继世6(6909个)"];

function FontDialog() {
  const item = "bg-[linear-gradient(90deg,#cacaca,#dcdcdc_50%,#e6e6e6)] font-['Liberation_Mono','Noto_Sans_CJK_SC',monospace] font-bold whitespace-nowrap";
  return (
    <section role="dialog" aria-label="字体" className="pointer-events-auto relative flex h-[419px] w-[749px] flex-col border border-[#858585] bg-[#b8b8b8] px-0.5 pb-0.5">
      <header className="flex h-5 shrink-0 items-center bg-[linear-gradient(180deg,#c4c4c4,#a2a2a2)]">
        <span className="flex flex-1 pl-0.5">
          <svg viewBox="0 0 16 15" className="h-3.5 w-[15px]" fill="#555">
            <path d="M4 9a3 3 0 0 1-2-5 3.500 3.500 0 0 1 5-3 3.500 3.500 0 0 1 5 1 3 3 0 0 1 2 4 3 3 0 0 1-2 4L9 9v5H7V9z" />
          </svg>
        </span>
        <h2>字体</h2>
        <span className="flex flex-1 justify-end pr-1"><button aria-label="关闭"><X size={13} strokeWidth={2} color="#333" /></button></span>
      </header>
      <div className={`flex min-h-0 flex-1 border border-[#8e8e8e] ${METAL}`}>
        <div className="flex w-[370px] shrink-0 flex-col">
          <div className="flex h-[18px] items-end pl-1">
            <button className="h-[17px] w-[51px] rounded-t border border-b-0 border-[#999] bg-[#d4d4d4] text-[10px] font-bold whitespace-nowrap">本地字体</button>
            <button className="h-4 w-[50px] rounded-t border border-b-0 border-[#aaa] bg-[#f0f0f0]">下载字体</button>
          </div>
          <div className="flex min-h-0 flex-1 flex-col border-t border-r border-[#999]">
            <div className="flex h-[25px] items-center justify-center gap-[3px] pl-1">
              <input aria-label="搜索字体" className="h-[17px] w-[86px] border border-[#bbb] bg-white" />
              <Pill className="w-[37px]">搜索</Pill><Pill className="w-[37px]">清除</Pill>
            </div>
            <div className="flex-1 border-y border-[#999] bg-white px-px">
              <ul className="grid h-[248px] auto-rows-fr">
                {FONTS.map((f, i) => (
                  <li key={f} className={`${item} ${i === 4 ? "border-2 border-[#e02424] pl-1.5 leading-[13px]" : "border-b-2 border-[#bcbcbc] pl-2 leading-[15px]"}`}><FontName text={f} /></li>
                ))}
              </ul>
            </div>
            <div className="flex h-6 items-center justify-center gap-[3px] pr-0.5">
              <Pill className="w-9">导入</Pill><Pill className="w-[46px]">云同步</Pill><Pill className="w-9">删除</Pill>
            </div>
          </div>
        </div>
        <div className="flex min-w-0 flex-1 flex-col pt-20 pr-0.5 pl-1">
          <Group title="字体优先级" className="mr-0.5" body="flex flex-col gap-[3px] px-[5px] pt-1.5 pb-1.5">
            <input aria-label="优先级 1" defaultValue="0" className="h-[17px] border border-[#999] bg-white px-px text-[#555]" />
            <input aria-label="优先级 2" defaultValue="0" className="h-[17px] border border-[#999] bg-white px-px text-[#555]" />
          </Group>
          <p className="mt-[5px] bg-white px-0.5 pt-0.5 leading-[14px] whitespace-nowrap text-red-600">优先级说明：字体随机出现几率为 值/(值的<br />总和）</p>
          <p className="mt-1 bg-white px-0.5 pt-[3px] leading-[14px] whitespace-nowrap">提示：字体可以多选<br />当选择多个字体的时候会随机从字体中选择<br />字型<br />请选择左边的字体到右边备选<br />当确定好后点“确定选择”</p>
          <Pill className="mt-0.5 h-[17px] border-[#e0957c]">→</Pill>
          <Pill className="mt-[3px] h-[17px]">←</Pill>
          <Pill className="mt-[3px] h-[17px]">确定选择</Pill>
        </div>
        <div className="flex w-[186px] shrink-0 flex-col">
          <span className="leading-[13px]">已选择字体</span>
          <div className="flex-1 bg-white">
            <ul className="grid h-[45px] auto-rows-fr">
              <li className={`${item} border-2 border-[#e02424] pl-1.5 leading-[12px]`}><FontName text="blood8真迹2(6902个)" /></li>
              <li className={`${item} border-b-2 border-[#cdcdcd] pl-2 leading-[15px]`}><FontName text="blood8真迹(8625个)" /></li>
            </ul>
          </div>
        </div>
      </div>
      <svg viewBox="0 0 12 18" className="absolute top-[272px] left-[511px] h-[17px] w-[11px]"><path d="M1 1v13l3-3 2.500 5.500 2-1L6 10.500h5z" fill="#fff" stroke="#333" strokeWidth=".9" /></svg>
    </section>
  );
}

/* ---------- taskbar ---------- */
function Taskbar() {
  const cell = "flex h-full w-[37px] items-center justify-center";
  return (
    <footer className="absolute inset-x-0 bottom-0 flex h-[30px] bg-[linear-gradient(90deg,#1f3a44,#20363f_40%,#1b2a3c)]">
      <button aria-label="开始" className="flex w-[37px] items-center justify-center">
        <svg viewBox="0 0 12 12" className="h-3 w-3"><path d="M0 1.700l5.500-.8v4.800H0zM6 .8L12 0v5.700H6zM0 6.200h5.500V11L0 10.300zM6 6.200h6V12l-6-.9z" fill="#fff" /></svg>
      </button>
      <label className="flex w-[256px] items-center gap-1.5 bg-[#f2f2f2] pl-2.5">
        <Search size={12} color="#222" strokeWidth={1.8} />
        <input aria-label="搜索" placeholder="在这里输入你要搜索的内容" className="flex-1 bg-transparent text-[11px] outline-none placeholder:text-[#444]" />
      </label>
      <span className={cell}><span className="h-[11px] w-[11px] rounded-full border-2 border-white" /></span>
      <span className={cell}>
        <svg viewBox="0 0 14 14" className="h-3.5" fill="none" stroke="#fff"><path d="M1 0v2h8V0M1 4.500h8v5H1zM1 14v-2h8v2M12.500 0v2M12.500 4v10" /></svg>
      </span>
      <span className={cell}><FaEdgeLegacy size={15} color="#1a82dc" /></span>
      <span className={`${cell} border-b-2 border-[#76b9ed]`}>
        <svg viewBox="0 0 18 16" className="h-[15px]"><path d="M1 1h6l1 2h9v12H1z" fill="#e8a820" /><path d="M1 5h16v10H1z" fill="#fcd668" /><path d="M5 15V9h8v6h-2v-3H7v3z" fill="#3a90d8" /></svg>
      </span>
      <span className={cell}>
        <svg viewBox="0 0 18 18" className="h-[17px]"><path d="M6 5V1.500h6V5" fill="none" stroke="#fff" strokeWidth="1.500" /><path d="M1 4.500h16V17H1z" fill="#fff" /><path d="M5 7h3.500v3.500H5z" fill="#f25022" /><path d="M9.500 7H13v3.500H9.500z" fill="#7fba00" /><path d="M5 11.500h3.500V15H5z" fill="#00a4ef" /><path d="M9.500 11.500H13V15H9.500z" fill="#ffb900" /></svg>
      </span>
      <span className={cell}>
        <svg viewBox="0 0 18 16" className="h-[15px]"><path d="M0 5l9-5 9 5v11H0z" fill="#0f6cbd" /><path d="M2 4h14v6H2z" fill="#fff" /><path d="M0 5l9 6 9-6v11H0z" fill="#38b0f0" /></svg>
      </span>
      <span className={`${cell} border-b-2 border-[#76b9ed]`}>
        <svg viewBox="0 0 36 36" className="h-[17px]"><rect width="36" height="36" rx="4" fill="#2e7cf0" /><path d="M7 10h6l4 14 5-13h6M7 10l5 17h3l4-11 2 11h3l5-17" fill="none" stroke="#fff" strokeWidth="2.500" /></svg>
      </span>
      <span className={`${cell} border-b-2 border-[#76b9ed] bg-white/10`}><AppLogo className="h-[18px]" /></span>
    </footer>
  );
}

export default function App() {
  return (
    <main className="relative h-screen w-full overflow-hidden bg-[linear-gradient(90deg,#00adfc_0%,#00a8f8_12%,#0090ec_35%,#0068d8_60%,#0848c0_80%,#083cb0_100%)] font-['Liberation_Sans','Noto_Sans_CJK_SC',sans-serif] text-[9px] leading-3 text-[#111]">
      <DesktopIcons />
      <WriterWindow />
      <EngraverWindow />
      <div className="pointer-events-none absolute inset-0 flex items-center justify-center">
        <FontDialog />
      </div>
      <Taskbar />
      <div className="absolute right-0 bottom-0 flex h-[244px] w-[474px] flex-col items-center bg-[#ff3333] pt-4 pl-4 font-['Noto_Sans','Noto_Sans_CJK_SC',sans-serif] text-[51px] leading-[72px] font-medium whitespace-nowrap text-white [clip-path:polygon(0_6px,6px_0,100%_0,100%_100%,8px_100%)]">
        <p className="text-[56px]">kvenjoy.com</p>
        <p>奎享官网</p>
        <p>word 绑定模版制作</p>
      </div>
    </main>
  );
}
